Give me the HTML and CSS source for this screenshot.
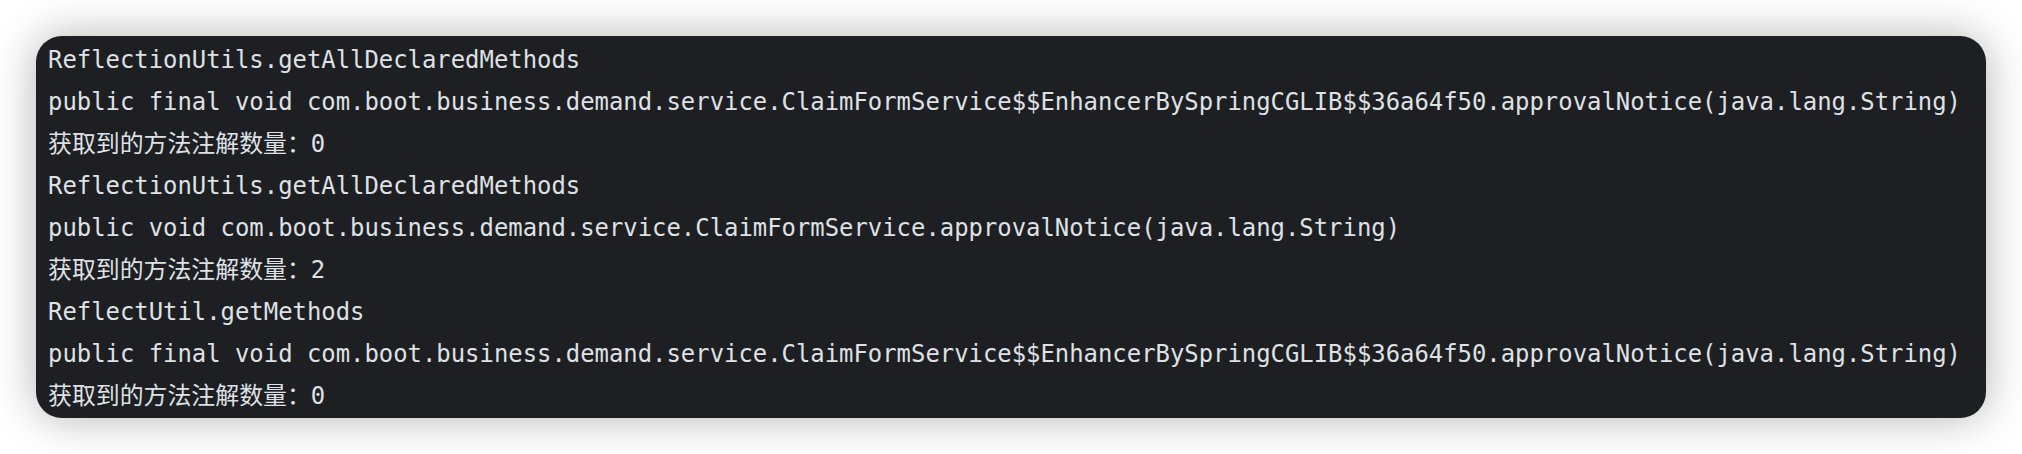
FILE: index.html
```html
<!DOCTYPE html>
<html lang="zh-CN">
<head>
<meta charset="utf-8">
<title>Console output</title>
<link rel="stylesheet" href="styles.css">
</head>
<body>
<div class="page">
  <div class="console">
    <div class="line">ReflectionUtils.getAllDeclaredMethods</div>
    <div class="line">public final void com.boot.business.demand.service.ClaimFormService$$EnhancerBySpringCGLIB$$36a64f50.approvalNotice(java.lang.String)</div>
    <div class="line">获取到的方法注解数量：0</div>
    <div class="line">ReflectionUtils.getAllDeclaredMethods</div>
    <div class="line">public void com.boot.business.demand.service.ClaimFormService.approvalNotice(java.lang.String)</div>
    <div class="line">获取到的方法注解数量：2</div>
    <div class="line">ReflectUtil.getMethods</div>
    <div class="line">public final void com.boot.business.demand.service.ClaimFormService$$EnhancerBySpringCGLIB$$36a64f50.approvalNotice(java.lang.String)</div>
    <div class="line">获取到的方法注解数量：0</div>
  </div>
</div>
</body>
</html>
```

FILE: styles.css
```css
html, body {
  margin: 0;
  padding: 0;
  background: #ffffff;
}

.page {
  padding: 36px;
}

.console {
  background: #1e1f22;
  border-radius: 26px;
  box-shadow: 0 0 44px rgba(0, 0, 0, 0.3);
  padding: 3px 12px 1px;
  height: 382px;
  box-sizing: border-box;
  overflow: hidden;
}

.line {
  font-family: "DejaVu Sans Mono", "Liberation Mono", "Noto Sans CJK SC", monospace;
  font-size: 23.9px;
  line-height: 42px;
  height: 42px;
  color: #dfe1e5;
  white-space: pre;
}

.line:lang(zh-CN) {
  font-feature-settings: normal;
}
```
